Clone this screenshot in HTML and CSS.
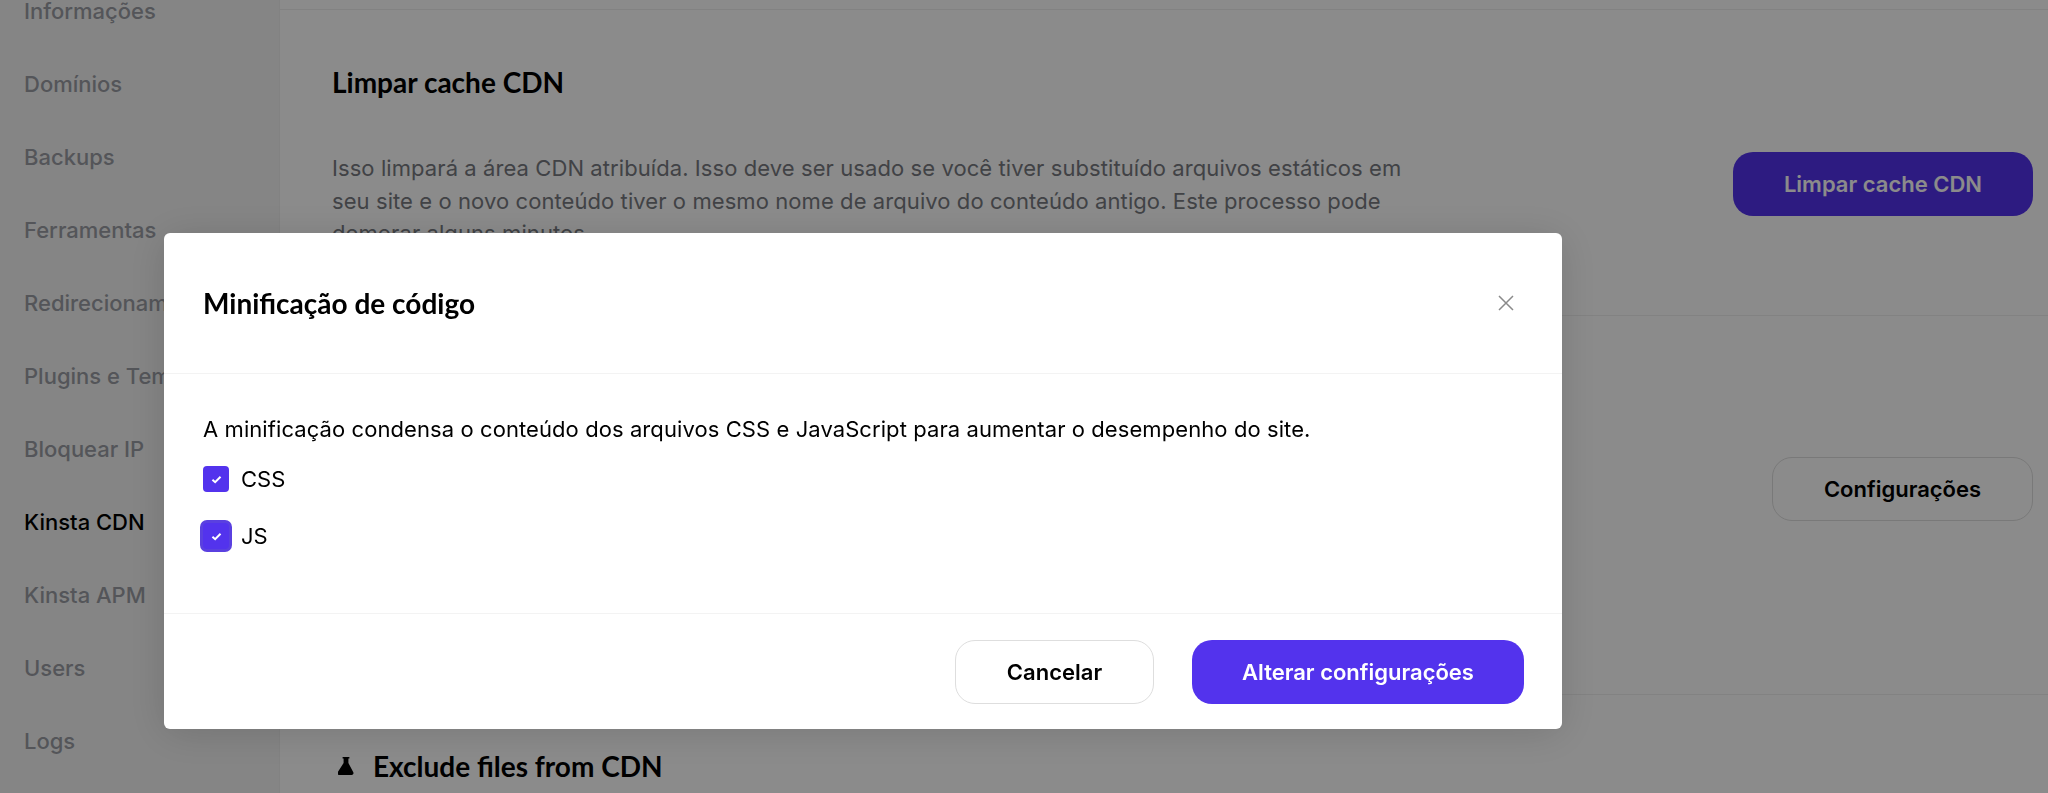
FILE: index.html
```html
<!DOCTYPE html>
<html lang="pt">
<head>
    <meta charset="utf-8">
    <title>Kinsta CDN</title>
    <link rel="stylesheet" href="styles.css">
</head>
<body>
    <div class="page">
        <nav class="sidebar">
            <a class="navItem">Informações</a>
            <a class="navItem">Domínios</a>
            <a class="navItem">Backups</a>
            <a class="navItem">Ferramentas</a>
            <a class="navItem">Redirecionamentos</a>
            <a class="navItem">Plugins e Temas</a>
            <a class="navItem">Bloquear IP</a>
            <a class="navItem navItemActive">Kinsta CDN</a>
            <a class="navItem">Kinsta APM</a>
            <a class="navItem">Users</a>
            <a class="navItem">Logs</a>
        </nav>
        <main class="content">
            <section class="section clearSection">
                <h2 class="sectionTitle">Limpar cache CDN</h2>
                <div class="sectionRow">
                    <p class="sectionText">Isso limpará a área CDN atribuída. Isso deve ser usado se você tiver substituído arquivos estáticos em seu site e o novo conteúdo tiver o mesmo nome de arquivo do conteúdo antigo. Este processo pode demorar alguns minutos.</p>
                    <button class="button buttonPrimary buttonClear">Limpar cache CDN</button>
                </div>
            </section>
            <section class="section settingsSection">
                <button class="button buttonOutline buttonSettings">Configurações</button>
            </section>
            <section class="excludeSection">
                <svg class="flaskIcon" viewBox="0 0 16 18" width="16" height="18">
                    <path fill="currentColor" d="M4.6 0h6.8v1.6h-1V6l4.9 9.2c.6 1.2-.1 2.8-1.6 2.8H1.3C-.2 18-.9 16.400-.3 15.200L5.600 6V1.600h-1z"/>
                </svg>
                <h2 class="sectionTitle">Exclude files from CDN</h2>
            </section>
        </main>
    </div>

    <div class="overlay"></div>

    <div class="modal">
        <header class="modalHeader">
            <h2 class="modalTitle">Minificação de código</h2>
            <svg class="closeIcon" viewBox="0 0 16 16" width="16" height="16">
                <path d="M1 1l14 14M15 1L1 15" fill="none" stroke="currentColor" stroke-width="1.500"/>
            </svg>
        </header>
        <div class="modalBody">
            <p class="modalText">A minificação condensa o conteúdo dos arquivos CSS e JavaScript para aumentar o desempenho do site.</p>
            <label class="checkRow">
                <span class="checkBox">
                    <svg viewBox="0 0 12 10" width="11" height="9"><path d="M1.500 5.200l3 2.800 6-6" fill="none" stroke="#fff" stroke-width="2.200"/></svg>
                </span>
                CSS
            </label>
            <label class="checkRow checkRowFocus">
                <span class="checkBox checkBoxFocus">
                    <svg viewBox="0 0 12 10" width="11" height="9"><path d="M1.500 5.200l3 2.800 6-6" fill="none" stroke="#fff" stroke-width="2.200"/></svg>
                </span>
                JS
            </label>
        </div>
        <footer class="modalFooter">
            <button class="button buttonOutline buttonCancel">Cancelar</button>
            <button class="button buttonPrimary buttonApply">Alterar configurações</button>
        </footer>
    </div>
</body>
</html>
```

FILE: styles.css
```css
html, body
{
    margin: 0;
    padding: 0;
    height: 100%;
    overflow: hidden;
}
body
{
    background-color: #fff;
    color: #000;
    font-family: "Inter", "Liberation Sans", sans-serif;
}
.page
{
    display: flex;
    height: 793px;
    overflow: hidden;
}
.sidebar
{
    flex: 0 0 280px;
    display: flex;
    flex-direction: column;
    margin-top: -26px;
    padding-left: 24px;
    box-sizing: border-box;
    background-color: #f4f4f4;
    border-right: 1px solid #eee;
}
.navItem
{
    flex: 0 0 73.100px;
    display: flex;
    align-items: center;
    color: #9a9da4;
    font-size: 22px;
    font-weight: 500;
    white-space: nowrap;
}
.navItemActive
{
    color: #000;
}
.content
{
    flex: 1;
    min-width: 0;
}
.section
{
    border-bottom: 1px solid #efefef;
}
.clearSection
{
    margin-top: 9px;
    border-top: 1px solid #efefef;
    height: 307px;
    box-sizing: border-box;
    padding: 0 15px 0 52px;
}
.sectionTitle
{
    margin: 0;
    font-family: "Lato", "Liberation Sans", sans-serif;
    font-size: 28px;
    font-weight: 700;
    color: #000;
}
.clearSection .sectionTitle
{
    padding-top: 55px;
    line-height: 34px;
}
.sectionRow
{
    display: flex;
    justify-content: space-between;
    align-items: flex-start;
    margin-top: 53px;
}
.sectionText
{
    width: 1090px;
    margin: 0;
    color: #777a80;
    font-size: 22px;
    line-height: 32.500px;
    letter-spacing: 0.080px;
}
.settingsSection
{
    height: 379px;
    box-sizing: border-box;
    display: flex;
    justify-content: flex-end;
    padding: 141px 15px 0 0;
}
.excludeSection
{
    display: flex;
    align-items: center;
    gap: 19px;
    padding: 54px 0 0 58px;
}
.excludeSection .sectionTitle
{
    line-height: 34px;
}
.flaskIcon
{
    color: #000;
}
.button
{
    height: 64px;
    box-sizing: border-box;
    border-radius: 20px;
    font-family: "Inter", "Liberation Sans", sans-serif;
    font-size: 22px;
    font-weight: 600;
    padding: 0;
}
.buttonPrimary
{
    background-color: #5333ed;
    border: 0;
    color: #fff;
}
.buttonOutline
{
    background-color: #fff;
    border: 1px solid #dedede;
    color: #000;
}
.buttonClear
{
    width: 300px;
}
.buttonSettings
{
    width: 261px;
}
.buttonCancel
{
    width: 199px;
}
.buttonApply
{
    width: 332px;
}
.overlay
{
    position: fixed;
    top: 0;
    left: 0;
    right: 0;
    bottom: 0;
    background-color: rgba(0,0,0,0.455);
}
.modal
{
    position: fixed;
    top: 233px;
    left: 164px;
    width: 1398px;
    height: 496px;
    display: flex;
    flex-direction: column;
    background-color: #fff;
    border-radius: 6px;
    box-shadow: 0 4px 40px rgba(0,0,0,0.14);
}
.modalHeader
{
    flex: 0 0 141px;
    box-sizing: border-box;
    display: flex;
    align-items: center;
    justify-content: space-between;
    padding: 0 48px 0 39px;
    border-bottom: 1px solid #f3f3f3;
}
.modalTitle
{
    margin: 0;
    font-family: "Lato", "Liberation Sans", sans-serif;
    font-size: 28px;
    font-weight: 700;
}
.closeIcon
{
    color: #8a8a8a;
}
.modalBody
{
    flex: 1;
    padding: 39px 39px 0;
}
.modalText
{
    margin: 0;
    font-size: 22px;
    line-height: 32px;
    letter-spacing: 0.080px;
}
.checkRow
{
    display: flex;
    align-items: center;
    gap: 12px;
    margin-top: 18px;
    height: 32px;
    font-size: 22px;
}
.checkRowFocus
{
    margin-top: 25px;
}
.checkBox
{
    width: 26px;
    height: 26px;
    border-radius: 4px;
    background-color: #5333ed;
    display: flex;
    align-items: center;
    justify-content: center;
}
.checkBoxFocus
{
    box-shadow: 0 0 0 3px #5a40e0;
}
.modalFooter
{
    flex: 0 0 116px;
    box-sizing: border-box;
    display: flex;
    justify-content: flex-end;
    gap: 38px;
    padding: 26px 38px 0 0;
    border-top: 1px solid #f3f3f3;
}
```
